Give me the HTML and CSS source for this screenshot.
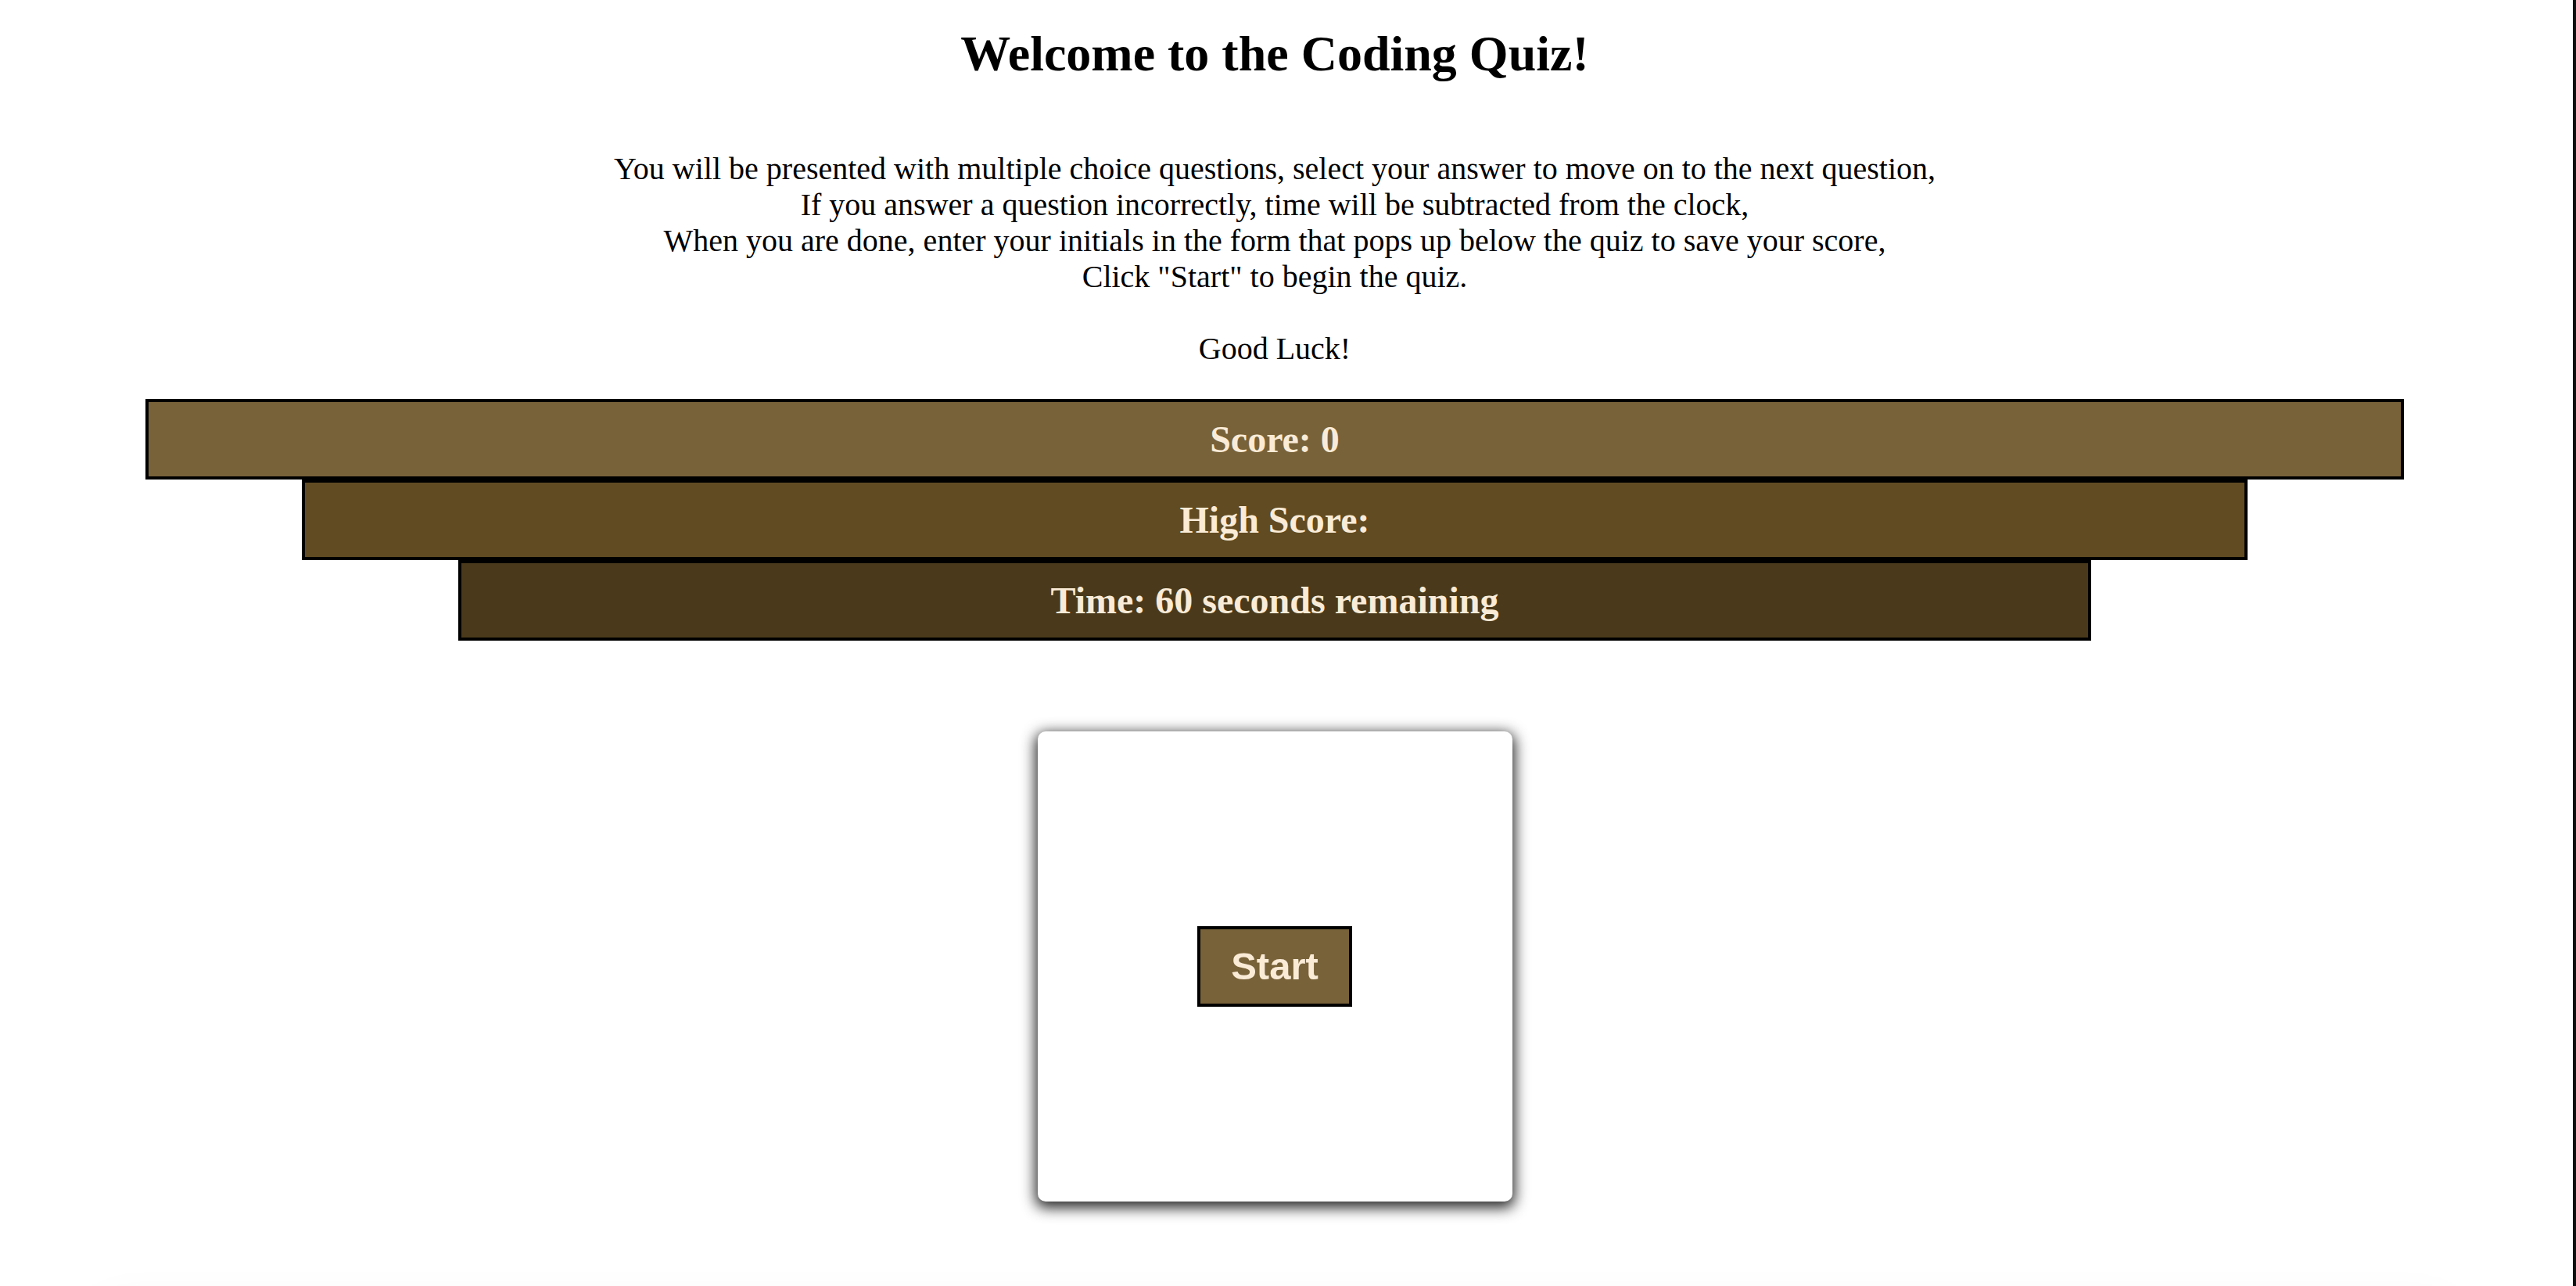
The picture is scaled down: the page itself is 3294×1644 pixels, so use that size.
FILE: index.html
```html
<!DOCTYPE html>
<html lang="en">
<head>
<meta charset="utf-8">
<title>Coding Quiz</title>
<link rel="stylesheet" href="styles.css">
</head>
<body>
  <div class="page">
    <main class="main">
      <h1 class="title">Welcome to the Coding Quiz!</h1>
      <p class="intro">You will be presented with multiple choice questions, select your answer to move on to the next question,<br>If you answer a question incorrectly, time will be subtracted from the clock,<br>When you are done, enter your initials in the form that pops up below the quiz to save your score,<br>Click "Start" to begin the quiz.<br><br>Good Luck!</p>
      <div class="stats">
        <div class="bar bar-score">Score: 0</div>
        <div class="bar bar-high">High Score: </div>
        <div class="bar bar-time">Time: 60 seconds remaining</div>
      </div>
      <section class="card">
        <button class="start-btn" type="button">Start</button>
      </section>
      <div class="ghost"></div>
    </main>
    <div class="edge"></div>
  </div>
</body>
</html>
```

FILE: styles.css
```css
html {
  overflow: hidden;
  background: #ffffff;
}

body {
  margin: 0;
  font-family: "Liberation Serif", "Times New Roman", serif;
  color: #000000;
}

.page {
  display: flex;
  width: 3294px;
  height: 1644px;
  overflow: hidden;
}

.main {
  width: 3260px;
  flex: 0 0 3260px;
}

.edge {
  flex: 0 0 4px;
  margin-left: 30px;
  background: #0e0e0e;
}

.title {
  margin: 33px 0 0;
  font-size: 64px;
  line-height: 71px;
  font-weight: bold;
  text-align: center;
}

.intro {
  margin: 89px 0 41px;
  font-size: 40px;
  line-height: 46px;
  text-align: center;
}

.stats {
  display: flex;
  flex-direction: column;
  align-items: center;
}

.bar {
  box-sizing: border-box;
  height: 103px;
  border: 4px solid #000000;
  color: #faebd7;
  font-weight: bold;
  font-size: 48px;
  line-height: 95px;
  text-align: center;
}

.bar-score {
  width: 2888px;
  background: #786239;
}

.bar-high {
  width: 2488px;
  background: #614b22;
}

.bar-time {
  width: 2088px;
  background: #4a3a1b;
}

.card {
  box-sizing: border-box;
  width: 607px;
  height: 601px;
  margin: 116px auto 0;
  background: #ffffff;
  border-radius: 10px;
  box-shadow: 0 5px 18px 3px rgba(0, 0, 0, 0.85);
  display: flex;
  align-items: center;
  justify-content: center;
}

.start-btn {
  box-sizing: border-box;
  width: 198px;
  height: 103px;
  margin: 0;
  padding: 0;
  border: 4px solid #000000;
  border-radius: 0;
  background: #786239;
  color: #faebd7;
  font-family: "Liberation Sans", Arial, sans-serif;
  font-weight: bold;
  font-size: 49px;
  line-height: 95px;
  cursor: pointer;
}

.ghost {
  width: 3000px;
  height: 300px;
  margin: 140px auto 0;
  background: #ffffff;
  box-shadow: 0 0 60px rgba(0, 0, 0, 0.07);
}
```
